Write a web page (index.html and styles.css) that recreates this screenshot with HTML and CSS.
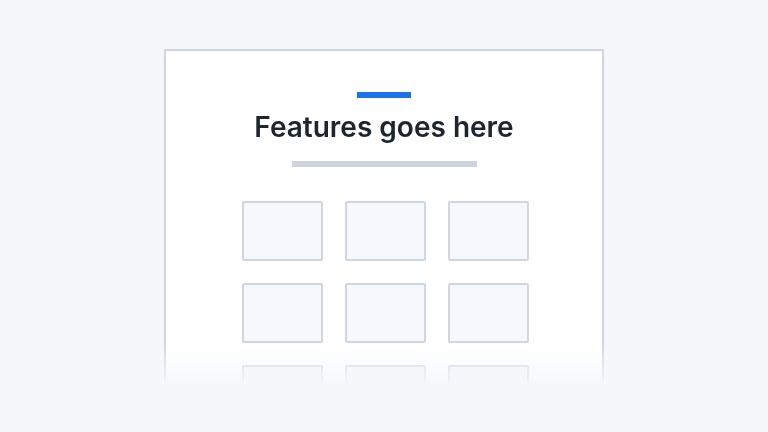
FILE: index.html
```html
<!DOCTYPE html>
<html lang="en">
<head>
    <meta charset="UTF-8">
    <meta name="viewport" content="width=device-width, initial-scale=1.0">
    <title>Features placeholder</title>
    <link rel="stylesheet" href="styles.css">
</head>
<body>
    <div class="stage">
        <div class="card">
            <div class="accent"></div>
            <h1 class="title">Features goes here</h1>
            <div class="subline"></div>

            <div class="grid">
                <div class="tile"></div>
                <div class="tile"></div>
                <div class="tile"></div>
                <div class="tile"></div>
                <div class="tile"></div>
                <div class="tile"></div>
                <div class="tile"></div>
                <div class="tile"></div>
                <div class="tile"></div>
            </div>
        </div>
    </div>
</body>
</html>
```

FILE: styles.css
```css
html, body {
    margin: 0;
    padding: 0;
}

body {
    background: #f5f8fb;
    font-family: Inter, "Noto Sans", sans-serif;
    width: 768px;
    height: 432px;
    overflow: hidden;
}

.stage {
    display: flex;
    justify-content: center;
    padding-top: 49px;
}

.card {
    width: 440px;
    height: 360px;
    box-sizing: border-box;
    background: #ffffff;
    border: 2px solid #cdd6e1;
    border-bottom: none;
    display: flex;
    flex-direction: column;
    align-items: center;
    padding-top: 41px;
    overflow: hidden;
    -webkit-mask-image: linear-gradient(to bottom, #000 294px, rgba(0,0,0,0) 338px);
    mask-image: linear-gradient(to bottom, #000 294px, rgba(0,0,0,0) 338px);
}

.card > * {
    flex-shrink: 0;
}

.accent {
    width: 54px;
    height: 6px;
    background: #1a73e8;
}

.title {
    margin: 12px 0 0;
    font-size: 28px;
    line-height: 34px;
    font-weight: 600;
    color: #1c2631;
    letter-spacing: 0;
}

.subline {
    width: 185px;
    height: 6px;
    margin-top: 17px;
    background: #cbd4df;
}

.grid {
    margin-top: 34px;
    margin-left: 2px;
    display: grid;
    grid-template-columns: repeat(3, 81px);
    grid-auto-rows: 60px;
    column-gap: 22px;
    row-gap: 22px;
}

.tile {
    box-sizing: border-box;
    background: #f5f8fc;
    border: 2px solid #cdd6e1;
    border-radius: 2px;
}
```
